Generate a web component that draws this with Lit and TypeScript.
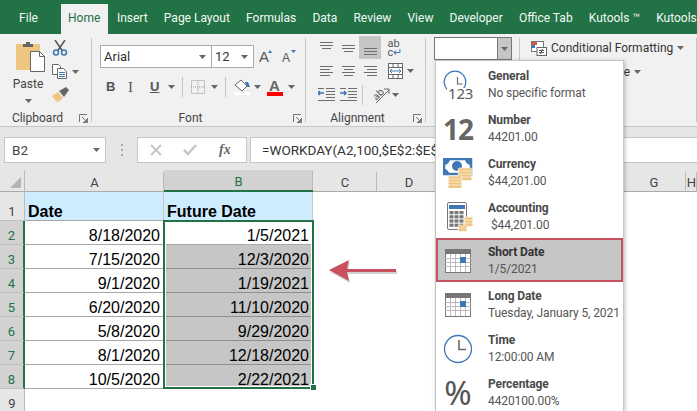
import { LitElement, html, css, svg } from "lit";
import { customElement } from "lit/decorators.js";

const TABS = ["File", "Home", "Insert", "Page Layout", "Formulas", "Data", "Review", "View", "Developer", "Office Tab", "Kutools ™", "Kutools Plus"];
const COLS = ["A", "B", "C", "D", "E", "F", "G", "H"];
const ROWS = [
  ["8/18/2020", "1/5/2021"],
  ["7/15/2020", "12/3/2020"],
  ["9/1/2020", "1/19/2021"],
  ["6/20/2020", "11/10/2020"],
  ["5/8/2020", "9/29/2020"],
  ["8/1/2020", "12/18/2020"],
  ["10/5/2020", "2/22/2021"],
];

const BLUE = "#3f78b5";
const GREY = "#6a6a6a";
const TAN = "#eec681";

const caret = svg`<svg class="caret" width="7" height="4" viewBox="0 0 7 4"><path d="M0 0h7L3.5 4z" fill="#666"/></svg>`;

const launcher = svg`<svg width="9" height="9" viewBox="0 0 9 9" fill="none" stroke="#777"><path d="M.5 8V.5H8M8.5 4v4.500H4M3 3l4.500 4.500M5 7.500h2.500V5"/></svg>`;

const lines = (rows: number[][]) => svg`<svg width="15" height="14" viewBox="0 0 15 14" stroke="#6e6e6e">${rows.map(([y, a, b]) => svg`<path d="M${a} ${y + 0.5}H${b}"/>`)}</svg>`;

const coins = (x: number, y: number, n: number, w = 14) => svg`${Array.from({ length: n }, (_, i) => svg`<rect x="${x}" y="${y + i * 3}" width="${w}" height="3.500" rx="1.700" fill="${TAN}" stroke="#fff" stroke-width=".6"/>`)}`;

const calendar = svg`<svg width="26" height="24" viewBox="0 0 26 24">
  <rect x=".5" y=".5" width="25" height="23" fill="#fff" stroke="#777"/>
  <rect x="0" y="0" width="26" height="5" fill="#777"/>
  <path d="M0 9.500h26M0 13.500h26M0 17.500h26M5.500 5v18M10.500 5v18M15.500 5v18M20.500 5v18" stroke="#bbb"/>
  <rect x="15" y="8" width="6" height="6" fill="${BLUE}"/>
</svg>`;

const MENU = [
  { title: "General", sub: "No specific format", icon: svg`<svg width="34" height="40" viewBox="0 0 34 40">
      <circle cx="14" cy="17" r="10.800" fill="#fff" stroke="${BLUE}" stroke-width="1.200"/>
      <path d="M16.500 12v7h5" fill="none" stroke="${GREY}" stroke-width="1.200"/>
      <rect x="6" y="23" width="27" height="12" fill="#fff"/>
      <text x="7" y="34" class="icon-num">123</text>
    </svg>` },
  { title: "Number", sub: "44201.00", icon: html`<span class="big-num">12</span>` },
  { title: "Currency", sub: "$44,201.00", icon: svg`<svg width="30" height="30" viewBox="0 0 30 30">
      <rect x="1" y="1" width="27" height="15" fill="#fff" stroke="${BLUE}" stroke-width="2.500"/>
      <path d="M1 1h6a6 6 0 0 1-6 6zM28 1h-6a6 6 0 0 0 6 6zM1 16v-5a5 5 0 0 1 5 5zM28 16v-5a5 5 0 0 0-5 5z" fill="${BLUE}"/>
      <circle cx="14" cy="8" r="5" fill="${BLUE}"/>
      ${coins(15, 10, 4)}${coins(5, 18, 4)}
    </svg>` },
  { title: "Accounting", sub: " $44,201.00", icon: svg`<svg width="32" height="30" viewBox="0 0 32 30">
      <rect x="5.500" y=".5" width="19" height="27" rx="1.500" fill="#fff" stroke="#777"/>
      <rect x="7" y="3" width="16" height="4" fill="${BLUE}"/>
      ${[0, 1, 2, 3].map((r) => [0, 1, 2].map((c) => svg`<rect x="${7.5 + c * 5}" y="${9 + r * 4.2}" width="4" height="3.200" fill="#777"/>`))}
      ${coins(22, 15, 3, 9)}${coins(16, 23, 2, 9)}
    </svg>` },
  { title: "Short Date", sub: "1/5/2021", icon: calendar, active: true },
  { title: "Long Date", sub: "Tuesday, January 5, 2021", icon: calendar },
  { title: "Time", sub: "12:00:00 AM", icon: svg`<svg width="30" height="30" viewBox="0 0 30 30">
      <circle cx="15" cy="15" r="13.500" fill="#fff" stroke="${BLUE}" stroke-width="1.300"/>
      <path d="M16 6v9.500h7" fill="none" stroke="${GREY}" stroke-width="1.600"/>
    </svg>` },
  { title: "Percentage", sub: "4420100.00%", icon: html`<span class="pct">%</span>` },
];

@customElement("app-root")
export class AppRoot extends LitElement {
  static styles = css`
    :host {
      display: block;
      position: relative;
      width: 697px;
      height: 411px;
      overflow: hidden;
      background: #fff;
      font-family: Roboto, "Noto Sans", sans-serif;
      font-size: 12px;
      color: #444;
    }
    svg { display: block; flex: none; }

    .tabs {
      display: flex;
      align-items: flex-end;
      height: 34px;
      padding-left: 11px;
      background: #217346;
      white-space: nowrap;
      overflow: hidden;
    }
    .tab {
      height: 30px;
      line-height: 29px;
      padding: 0 8.100px;
      color: #f4f8f5;
    }
    .tab.file { margin-right: 13.500px; }
    .tab.on { background: #f1f1f1; color: #217346; padding: 0 7.500px; margin: 0 1px; }

    .ribbon {
      display: flex;
      height: 93px;
      background: #f1f1f1;
      border-bottom: 1px solid #c6c6c6;
      box-sizing: border-box;
    }
    .group {
      display: grid;
      grid-template-rows: minmax(0, 1fr) 16px;
      margin: 4px 0;
      border-right: 1px solid #c6c6c6;
      box-sizing: border-box;
    }
    .foot {
      display: grid;
      grid-template-columns: 1fr auto 1fr 16px;
      align-items: center;
      line-height: 16px;
      color: #444;
      margin: 4px 0 -4px;
    }
    .foot span { grid-column: 2; }
    .foot svg { grid-column: 4; justify-self: end; margin-right: 3px; }
    .body { display: flex; min-height: 0; }

    .clip { width: 92px; }
    .paste { display: flex; flex-direction: column; align-items: center; width: 56px; padding-top: 3px; }
    .paste svg:first-child { margin-left: 3px; }
    .paste span { margin-top: 3px; line-height: 18px; }
    .paste .caret { margin-top: 6px; }
    .clip-tools { display: flex; flex-direction: column; gap: 8px; padding-top: 2px; margin-left: -4px; }
    .clip-tools div { display: flex; align-items: center; gap: 4px; }

    .font { width: 214px; }
    .font .body { flex-direction: column; padding: 7px 0 0 8px; gap: 10px; }
    .row { display: flex; align-items: center; }
    .combo {
      display: flex;
      align-items: center;
      justify-content: space-between;
      height: 23px;
      box-sizing: border-box;
      background: #fff;
      border: 1px solid #ababab;
      padding: 0 5px 0 3px;
      font-size: 13px;
      color: #333;
    }
    .combo.name { width: 112px; }
    .combo.size { width: 43px; margin-left: -1px; }
    .grow { margin-left: 5px; display: flex; gap: 8px; }
    .fmt { gap: 0; height: 18px; padding-left: 6px; }
    .fmt b, .fmt i, .fmt u { width: 22px; font: 700 13px/18px "Liberation Sans", sans-serif; color: #555; }
    .fmt i { font-family: "Liberation Serif", serif; font-weight: 400; font-size: 15px; }
    .fmt u { width: 15px; }
    .gap3 { width: 3px; }
    .gap4 { width: 4px; }
    .gap5 { width: 5px; }
    .gap6 { width: 6px; }
    .vsep { width: 1px; height: 20px; background: #c6c6c6; margin: 0 8px 0 7px; flex: none; }

    .align { width: 120px; }
    .align .body {
      display: grid;
      grid-template-columns: 22px 22px 22px 28px 12px;
      grid-auto-rows: 23.500px;
      margin-top: -2px;
      padding-left: 9px;
      align-items: center;
      justify-items: center;
    }
    .align .on { background: #c6c6c6; width: 22px; height: 23px; display: grid; place-items: center; }
    .align .body > .caret { justify-self: start; margin-left: -2px; }
    .wrap { font-size: 11px; line-height: 9px; color: #555; }
    .wrap span { color: #3f78b5; }
    .orient { grid-column: 3 / span 3; display: flex; align-items: center; justify-self: start; gap: 2px; }
    .orient .vsep { margin: 0 7px 0 3px; }

    .number { width: 94px; }
    .num-combo {
      display: flex;
      width: 78px;
      height: 23px;
      margin: -1px 0 0 8px;
      box-sizing: border-box;
      background: #fff;
      border: 1px solid #777;
    }
    .num-combo div { margin-left: auto; width: 13px; background: #c6c6c6; border-left: 1px solid #777; display: grid; place-items: center; }

    .styles { width: 177px; }
    .styles .body { flex-direction: column; margin-top: -2px; padding-left: 11px; }
    .style-row { display: flex; align-items: center; gap: 4px; height: 24px; white-space: nowrap; color: #333; }
    .style-row.second { width: 110px; justify-content: flex-end; }

    .fbar {
      display: flex;
      align-items: center;
      height: 43px;
      padding: 10px 0 7px 4px;
      box-sizing: border-box;
      background: #e6e6e6;
    }
    .box { height: 26px; box-sizing: border-box; background: #fff; border: 1px solid #c6c6c6; display: flex; align-items: center; }
    .namebox { width: 102px; padding: 0 5px 0 7px; justify-content: space-between; font-size: 13.500px; }
    .grip { width: 2px; height: 12px; margin: 0 14px 0 15px; background: repeating-linear-gradient(#aaa 0 2px, transparent 2px 5px); }
    .fx-tools { width: 110px; padding-left: 12px; gap: 21px; }
    .fx { font: italic 700 14px "Liberation Serif", serif; color: #666; margin-left: 1px; }
    .formula { flex: 1; margin-left: 3px; padding-left: 11px; border-right: 0; font-size: 13.500px; color: #333; white-space: nowrap; overflow: hidden; }

    .sheet {
      display: grid;
      grid-template-columns: 25px 139px 149px 64px 64px 90px 91px 64px 1fr;
      grid-template-rows: 22px 29px repeat(7, 24px) 24px;
      background: #fff;
    }
    .corner, .ch, .rh { background: #e6e6e6; color: #444; }
    .corner { border-right: 1px solid #bbb; border-bottom: 1px solid #ababab; display: flex; align-items: flex-end; justify-content: flex-end; padding: 0 3px 3px 0; box-sizing: border-box; }
    .ch {
      display: grid;
      place-items: center;
      padding-top: 3px;
      box-sizing: border-box;
      font-size: 13px;
      border-bottom: 1px solid #ababab;
      background-image: linear-gradient(#bbb, #bbb);
      background-size: 1px 19px;
      background-position: right bottom;
      background-repeat: no-repeat;
    }
    .ch.sel { background-color: #d2d2d2; color: #217346; border-bottom: 2px solid #217346; }
    .rh {
      grid-column: 1;
      display: flex;
      justify-content: center;
      align-items: flex-end;
      font-size: 13px;
      line-height: 14px;
      padding-bottom: 1px;
      border-bottom: 1px solid #c0c0c0;
      border-right: 1px solid #bbb;
      box-sizing: border-box;
    }
    .rh.sel { background: #d2d2d2; color: #217346; border-right: 2px solid #217346; }
    .cell {
      display: flex;
      align-items: flex-end;
      justify-content: flex-end;
      box-sizing: border-box;
      padding: 0 3px 0 2px;
      font: 16px/17px "Liberation Sans", sans-serif;
      color: #000;
      border-bottom: 1px solid #a8a8a8;
      border-right: 1px solid #c6c6c6;
    }
    .cell.a { grid-column: 2; }
    .cell.b { grid-column: 3; }
    .cell.head { background: #cdecfe; font-weight: 700; justify-content: flex-start; padding: 0 3px; line-height: 17px; }
    .cell.gray { background: #c6c6c6; border-bottom-color: #8e8e8e; }
    .selection {
      grid-column: 3;
      grid-row: 3 / 10;
      position: relative;
      margin: -1px -1px 0 -1px;
      border: 2px solid #217346;
      box-shadow: inset 0 0 0 1px #fff;
      pointer-events: none;
    }
    .handle {
      position: absolute;
      right: -5px;
      bottom: -4px;
      width: 5px;
      height: 5px;
      background: #217346;
      border: 1px solid #fff;
    }

    .menu {
      position: absolute;
      left: 435px;
      top: 60px;
      width: 189px;
      height: 351px;
      padding-top: 1px;
      box-sizing: border-box;
      background: #fff;
      border: 1px solid #c6c6c6;
      border-bottom: 0;
      box-shadow: 1px 1px 4px rgba(0, 0, 0, 0.25);
    }
    .item { display: flex; align-items: center; height: 44px; box-sizing: border-box; padding-top: 2px; letter-spacing: -0.1px; }
    .item.on { background: #c6c6c6; outline: 2px solid #c9515f; outline-offset: -2px; }
    .icon { width: 44px; margin-right: 8px; height: 40px; display: flex; align-items: center; justify-content: center; flex: none; }
    .title { font-weight: 700; line-height: 17px; color: #4a4a4a; }
    .item.on .title { color: #333; }
    .sub { line-height: 17px; color: #555; white-space: pre; }
    .icon-num { font: 15px "Noto Sans", sans-serif; fill: #5a5a5a; letter-spacing: -0.2px; }
    .big-num { font: 700 28px/32px "Noto Sans", sans-serif; color: #666; letter-spacing: -1px; }
    .pct { font: 400 33px/36px "Noto Sans", sans-serif; color: #555; }

    .arrow { position: absolute; left: 326px; top: 256px; }
  `;

  private renderClipboard() {
    return html`<div class="group clip">
      <div class="body">
        <div class="paste">
          <svg width="30" height="31" viewBox="0 0 30 31">
            <rect x="1" y="3" width="24" height="26" rx="1" fill="${TAN}"/>
            <path d="M8 6V3h3V1h4v2h3v3z" fill="#666"/>
            <path d="M15.500 10.500h9l5 5v15h-14z" fill="#fff" stroke="#666"/>
            <path d="M24.500 10.500v5h5" fill="none" stroke="#666"/>
          </svg>
          <span>Paste</span>
          ${caret}
        </div>
        <div class="clip-tools">
          <svg width="16" height="16" viewBox="0 0 16 16" fill="none">
            <path d="M3 0l7.500 11M13 0L5.500 11" stroke="#555" stroke-width="1.500"/>
            <circle cx="4" cy="12.500" r="2.500" stroke="${BLUE}" stroke-width="1.500"/>
            <circle cx="12" cy="12.500" r="2.500" stroke="${BLUE}" stroke-width="1.500"/>
          </svg>
          <div>
            <svg width="16" height="15" viewBox="0 0 16 15" fill="#fff" stroke="#666">
              <path d="M.5.5h6l2 2v8h-8z"/>
              <path d="M5.500 4.500h6l3 3v7h-9z"/>
              <path d="M7 8.500h6M7 10.500h6M7 12.500h6" stroke="${BLUE}"/>
            </svg>
            ${caret}
          </div>
          <svg width="17" height="15" viewBox="0 0 17 15">
            <path d="M0 9l6-4 5 6-5 4-2-1z" fill="${TAN}"/>
            <path d="M7 4l7-4 3 3-5 7z" fill="#666"/>
          </svg>
        </div>
      </div>
      <div class="foot"><span>Clipboard</span>${launcher}</div>
    </div>`;
  }

  private renderFont() {
    return html`<div class="group font">
      <div class="body">
        <div class="row">
          <div class="combo name"><span>Arial</span>${caret}</div>
          <div class="combo size"><span>12</span>${caret}</div>
          <div class="grow">
            <svg width="15" height="13" viewBox="0 0 15 13"><text x="0" y="12" font-family="Liberation Sans" font-size="15" fill="#555">A</text><path d="M9 3l2-3 2 3z" fill="${BLUE}"/></svg>
            <svg width="15" height="13" viewBox="0 0 15 13"><text x="0" y="12" font-family="Liberation Sans" font-size="12" fill="#555">A</text><path d="M9 0h5l-2.500 3z" fill="${BLUE}"/></svg>
          </div>
        </div>
        <div class="row fmt">
          <b>B</b><i>I</i><u>U</u>
          <span class="gap3"></span>${caret}
          <span class="vsep"></span>
          <svg width="14" height="14" viewBox="0 0 14 14" stroke="#999" stroke-dasharray="1 1"><path d="M.5.5h13v13H.5zM7 0v14M0 7h14" fill="none"/></svg>
          <span class="gap6"></span>${caret}
          <span class="vsep"></span>
          <svg width="16" height="16" viewBox="0 0 16 16">
            <path d="M1 6l6-5 6 6-5 5z" fill="#fff" stroke="#666"/>
            <path d="M11 3h3l2 5h-3z" fill="${BLUE}"/>
            <rect x="0" y="13" width="16" height="3" fill="#fff"/>
          </svg>
          <span class="gap4"></span>${caret}
          <span class="gap6"></span>
          <svg width="16" height="17" viewBox="0 0 16 17">
            <text x="2" y="12" font-family="Liberation Sans" font-weight="700" font-size="15" fill="#666">A</text>
            <rect x="0" y="13" width="16" height="4" fill="#f00"/>
          </svg>
          <span class="gap5"></span>${caret}
        </div>
      </div>
      <div class="foot"><span>Font</span>${launcher}</div>
    </div>`;
  }

  private renderAlignment() {
    return html`<div class="group align">
      <div class="body">
        ${lines([[1, 1, 14], [4, 1, 14], [7, 3, 12]])}
        ${lines([[4, 1, 14], [7, 1, 14], [10, 3, 12]])}
        <div class="on">${lines([[7, 1, 14], [10, 1, 14], [13, 1, 14]])}</div>
        <div class="wrap">ab<br />c<span>↵</span></div>
        <span></span>
        ${lines([[2, 1, 14], [5, 1, 11], [8, 1, 14], [11, 1, 11]])}
        ${lines([[2, 1, 14], [5, 3, 12], [8, 1, 14], [11, 3, 12]])}
        ${lines([[2, 1, 14], [5, 4, 14], [8, 1, 14], [11, 4, 14]])}
        <svg width="15" height="16" viewBox="0 0 15 16" fill="none" stroke="#666">
          <rect x=".5" y=".5" width="14" height="15" fill="#fff"/>
          <path d="M0 4.500h15M0 11.500h15M5 0v4M10 0v4M5 12v4M10 12v4"/>
          <path d="M2 8h11M2 8l2-2M2 8l2 2M13 8l-2-2M13 8l-2 2" stroke="${BLUE}"/>
        </svg>
        ${caret}
        <svg width="17" height="13" viewBox="0 0 17 13" fill="none" stroke="#6e6e6e">
          <path d="M8 .5h9M8 3.500h9M8 6.500h9M8 9.500h9M0 12.500h17M0 .5h6"/>
          <path d="M0 5h6M2 3L0 5l2 2" stroke="${BLUE}" stroke-width="1.600"/>
        </svg>
        <svg width="17" height="13" viewBox="0 0 17 13" fill="none" stroke="#6e6e6e">
          <path d="M8 .5h9M8 3.500h9M8 6.500h9M8 9.500h9M0 12.500h17M0 .5h6"/>
          <path d="M0 5h6M4 3l2 2-2 2" stroke="${BLUE}" stroke-width="1.600"/>
        </svg>
        <div class="orient">
          <span class="vsep"></span>
          <svg width="18" height="18" viewBox="0 0 18 18" fill="none" stroke="#666">
            <text x="1" y="12" transform="rotate(-45 6 9)" font-family="Noto Sans" font-size="10" fill="#555" stroke="none">ab</text>
            <path d="M4 17L17 4M12 3h5v5"/>
          </svg>
          ${caret}
        </div>
      </div>
      <div class="foot"><span>Alignment</span>${launcher}</div>
    </div>`;
  }

  private renderStyles() {
    return html`<div class="group styles">
      <div class="body">
        <div class="style-row">
          <svg width="16" height="15" viewBox="0 0 16 15" fill="none">
            <rect x=".5" y=".5" width="12" height="10" fill="#fff" stroke="#777"/>
            <rect x="1" y="1" width="5" height="3" fill="#d2584b"/>
            <rect x="1" y="4" width="3" height="3" fill="${BLUE}"/>
            <rect x="6" y="6.500" width="9.500" height="8" fill="#fff" stroke="#666"/>
            <path d="M8 9.500h5M8 11.500h5M11.500 8l-2 5" stroke="#555"/>
          </svg>
          <span>Conditional Formatting</span>${caret}
        </div>
        <div class="style-row second"><span>Format as Table</span>${caret}</div>
      </div>
      <div></div>
    </div>`;
  }

  private renderSheet() {
    return html`<div class="sheet">
      <div class="corner">
        <svg width="11" height="11" viewBox="0 0 11 11"><path d="M11 0v11H0z" fill="#b4b4b4"/></svg>
      </div>
      ${COLS.map((c) => html`<div class="ch ${c === "B" ? "sel" : ""}">${c}</div>`)}

      <div class="rh" style="grid-row:2">1</div>
      <div class="cell a head" style="grid-row:2">Date</div>
      <div class="cell b head" style="grid-row:2">Future Date</div>

      ${ROWS.map(
        ([a, b], i) => html`
          <div class="rh sel" style="grid-row:${i + 3}">${i + 2}</div>
          <div class="cell a" style="grid-row:${i + 3}">${a}</div>
          <div class="cell b ${i > 0 ? "gray" : ""}" style="grid-row:${i + 3}">${b}</div>
        `,
      )}
      <div class="rh" style="grid-row:10">9</div>

      <div class="selection"><div class="handle"></div></div>
    </div>`;
  }

  render() {
    return html`
      <div class="tabs">
        ${TABS.map((t) => html`<div class="tab ${t === "Home" ? "on" : ""} ${t === "File" ? "file" : ""}">${t}</div>`)}
      </div>
      <div class="ribbon">
        ${this.renderClipboard()} ${this.renderFont()} ${this.renderAlignment()}
        <div class="group number">
          <div class="body">
            <div class="num-combo"><div>${caret}</div></div>
          </div>
          <div></div>
        </div>
        ${this.renderStyles()}
      </div>
      <div class="fbar">
        <div class="box namebox"><span>B2</span>${caret}</div>
        <div class="grip"></div>
        <div class="box fx-tools">
          <svg width="12" height="12" viewBox="0 0 12 12" stroke="#c6c6c6" stroke-width="2"><path d="M1 1l10 10M11 1L1 11"/></svg>
          <svg width="14" height="12" viewBox="0 0 14 12" fill="none" stroke="#c6c6c6" stroke-width="2.500"><path d="M1 6l4 4 8-9"/></svg>
          <span class="fx">fx</span>
        </div>
        <div class="box formula">=WORKDAY(A2,100,$E$2:$E$8)</div>
      </div>
      ${this.renderSheet()}

      <svg class="arrow" width="74" height="30" viewBox="0 0 74 30">
        <path d="M70 13H21l2-9L3 14l20 11-2-9h49z" fill="#000" opacity=".18" transform="translate(1 2)"/>
        <path d="M70 13H21l2-9L3 14l20 11-2-9h49z" fill="#c9515f"/>
      </svg>

      <div class="menu">
        ${MENU.map(
          (m) => html`<div class="item ${m.active ? "on" : ""}">
            <div class="icon">${m.icon}</div>
            <div>
              <div class="title">${m.title}</div>
              <div class="sub">${m.sub}</div>
            </div>
          </div>`,
        )}
      </div>
    `;
  }
}
